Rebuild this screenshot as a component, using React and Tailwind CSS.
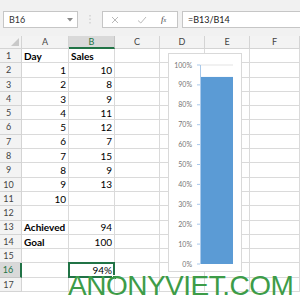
import React from 'react';

const COLS = ['A', 'B', 'C', 'D', 'E', 'F'];
const COL_W = ['w-[47px]', 'w-[46px]', 'w-[45px]', 'w-[45px]', 'w-[45px]', 'w-[50px]'];

// [A, B, A bold, B bold]
const ROWS = [
  ['Day', 'Sales', true, true],
  [1, 10], [2, 8], [3, 9], [4, 11], [5, 12], [6, 7], [7, 15], [8, 9], [9, 13], [10, ''],
  ['', ''],
  ['Achieved', 94, true],
  ['Goal', 100, true],
  ['', ''],
  ['', '94%'],
  ['', ''],
];

const cellFont = { fontFamily: 'Lato, "Liberation Sans", sans-serif' };

const Cell = ({ value, bold, selected, width }) => {
  const isNum = typeof value === 'number' || (typeof value === 'string' && value.endsWith('%'));
  return (
    <div
      className={`relative ${width} h-full shrink-0 border-r border-b border-[#dadada] flex items-center px-[2px] text-[10px] text-black leading-none ${
        isNum ? 'justify-end' : 'justify-start'
      } ${bold ? 'font-bold' : ''}`}
    >
      {value}
      {selected && (
        <>
          <div className="absolute -left-[1px] -top-[1px] -right-[1px] -bottom-[1px] border-2 border-[#217346]" />
          <div className="absolute -right-[3px] -bottom-[3px] w-[5px] h-[5px] bg-[#217346] border border-white" />
        </>
      )}
    </div>
  );
};

const Chart = () => {
  const top = 11;
  const bottom = 210;
  const step = (bottom - top) / 10;
  const ticks = Array.from({ length: 11 }, (_, i) => i * 10);
  const barTop = bottom - 0.94 * (bottom - top);
  return (
    <div className="absolute left-[168px] top-[53px] w-[74px] h-[219px] bg-white border border-[#d9d9d9]">
      <svg width="72" height="217" viewBox="0 0 72 217">
        <line x1="31" y1={top} x2="64" y2={top} stroke="#e3e3e3" strokeWidth="1" />
        <rect x="32" y={barTop} width="32" height={bottom - barTop} fill="#5b9bd5" />
        <line x1="31.5" y1={top} x2="31.5" y2={bottom} stroke="#a9c9ea" strokeWidth="1" />
        {ticks.map((t) => {
          const y = bottom - (t / 10) * step;
          return (
            <g key={t}>
              <line x1="28" y1={y} x2="31" y2={y} stroke="#a9c9ea" strokeWidth="1" />
              <text
                x="23"
                y={y + 2.5}
                textAnchor="end"
                fontSize="7"
                fill="#767676"
                fontFamily='Lato, "Liberation Sans", sans-serif'
              >
                {t}%
              </text>
            </g>
          );
        })}
      </svg>
    </div>
  );
};

const FormulaBar = () => (
  <div className="h-[36px] bg-[#f1f1f1] flex items-start pt-[11px] pl-[3px] gap-0" style={cellFont}>
    <div className="w-[75px] h-[17px] bg-white border border-[#c6c6c6] flex items-center justify-between pl-[5px] pr-[4px]">
      <span className="text-[9px] text-[#333]">B16</span>
      <svg width="6" height="4" viewBox="0 0 6 4">
        <path d="M0 0 L6 0 L3 3.5 Z" fill="#8a8a8a" />
      </svg>
    </div>
    <div className="w-[24px] h-[17px] flex items-center justify-center">
      <svg width="2" height="9" viewBox="0 0 2 9">
        <rect x="0.5" y="0" width="1" height="1.5" fill="#c4c4c4" />
        <rect x="0.5" y="3.5" width="1" height="1.5" fill="#c4c4c4" />
        <rect x="0.5" y="7" width="1" height="1.5" fill="#c4c4c4" />
      </svg>
    </div>
    <div className="w-[76px] h-[17px] bg-white border border-[#c6c6c6] flex items-center pl-[8px]">
      <svg width="8" height="8" viewBox="0 0 8 8">
        <path d="M1 1 L7 7 M7 1 L1 7" stroke="#b9b9b9" strokeWidth="1" />
      </svg>
      <svg width="10" height="8" viewBox="0 0 10 8" className="ml-[18px]">
        <path d="M1 4.5 L3.8 7 L9 1" stroke="#b9b9b9" strokeWidth="1" fill="none" />
      </svg>
      <span
        className="ml-[14px] text-[9px] italic text-[#444]"
        style={{ fontFamily: '"Liberation Serif", serif' }}
      >
        f<span className="text-[6px]">x</span>
      </span>
    </div>
    <div className="ml-[4px] flex-1 h-[17px] bg-white border border-[#c6c6c6] border-r-0 flex items-center pl-[5px]">
      <span className="text-[9px] text-[#222]">=B13/B14</span>
    </div>
  </div>
);

const App = () => {
  return (
    <div className="relative w-[300px] h-[297px] overflow-hidden bg-white" style={cellFont}>
      <FormulaBar />

      {/* column headers */}
      <div className="flex h-[13px] bg-[#f3f3f3]">
        <div className="relative w-[22px] shrink-0 border-r border-b border-[#d4d4d4]">
          <svg width="8" height="8" viewBox="0 0 8 8" className="absolute right-[2px] bottom-[2px]">
            <path d="M8 0 L8 8 L0 8 Z" fill="#c9c9c9" />
          </svg>
        </div>
        {COLS.map((c, i) => (
          <div
            key={c}
            className={`${COL_W[i]} shrink-0 flex items-center justify-center text-[9px] border-r ${
              c === 'B'
                ? 'bg-[#d9d9d9] text-[#217346] border-b-2 border-b-[#217346] border-r-[#c6c6c6]'
                : 'text-[#444] border-b border-[#d4d4d4]'
            }`}
          >
            {c}
          </div>
        ))}
      </div>

      {/* rows */}
      {ROWS.map((r, i) => {
        const n = i + 1;
        const sel = n === 16;
        return (
          <div key={n} className="flex h-[14.3px]">
            <div
              className={`w-[22px] shrink-0 flex items-center justify-center pr-[4px] text-[9px] border-b ${
                sel
                  ? 'bg-[#d9d9d9] text-[#217346] border-r-2 border-r-[#217346] border-b-[#c6c6c6]'
                  : 'bg-[#f3f3f3] text-[#444] border-r border-[#d4d4d4]'
              }`}
            >
              {n}
            </div>
            <Cell value={r[0]} bold={r[2]} width={COL_W[0]} />
            <Cell value={r[1]} bold={r[3]} width={COL_W[1]} selected={sel} />
            <Cell value="" width={COL_W[2]} />
            <Cell value="" width={COL_W[3]} />
            <Cell value="" width={COL_W[4]} />
            <Cell value="" width={COL_W[5]} />
          </div>
        );
      })}

      <Chart />

      {/* watermark */}
      <div
        className="absolute left-[68px] top-[272px] text-[28px] leading-[28px] text-[#3d9c48] whitespace-nowrap tracking-[-0.5px]"
        style={{ fontFamily: '"Liberation Sans", sans-serif' }}
      >
        ANONYVIET.COM
      </div>
    </div>
  );
};

export default App;
